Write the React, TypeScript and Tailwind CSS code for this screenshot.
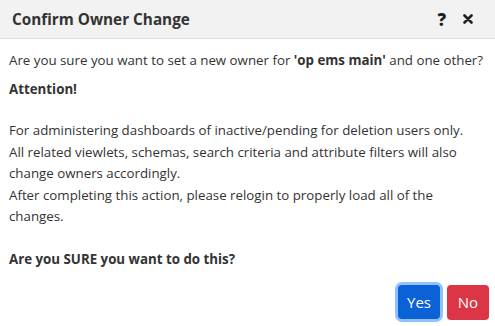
import React from "react";

export default function App() {
  return (
    <div
      className="w-[495px] h-[326px] bg-white text-[#333] overflow-hidden flex flex-col"
      style={{ fontFamily: '"Open Sans", "Noto Sans", sans-serif' }}
    >
      {/* header */}
      <div className="h-[39px] shrink-0 bg-[#f2f2f2] border-b border-[#dcdcdc] flex items-center justify-between pl-[12px] pr-[22px]">
        <span className="text-[15.3px] font-bold text-[#333]">Confirm Owner Change</span>
        <div className="flex items-center gap-[17px] text-[#222]">
          <span className="text-[17px] font-extrabold leading-none">?</span>
          <svg width="10" height="10" viewBox="0 0 10 10">
            <path d="M1.5 1.5 L8.5 8.5 M8.5 1.5 L1.5 8.5" stroke="#222" strokeWidth="2.6" strokeLinecap="round" />
          </svg>
        </div>
      </div>

      {/* body */}
      <div className="flex-1 px-[9px] pt-[11px] text-[13.3px] leading-[21.5px]">
        <p>
          Are you sure you want to set a new owner for <b>'op ems main'</b> and one other?
        </p>
        <p className="mt-[7px] font-bold">Attention!</p>
        <p className="mt-[20px]">
          For administering dashboards of inactive/pending for deletion users only.
          <br />
          All related viewlets, schemas, search criteria and attribute filters will also change owners accordingly.
          <br />
          After completing this action, please relogin to properly load all of the changes.
        </p>
        <p className="mt-[21px] font-bold">Are you SURE you want to do this?</p>
      </div>

      {/* footer */}
      <div className="flex justify-end gap-[7px] pr-[6px] pb-[6px]">
        <button className="h-[34px] w-[42px] rounded-[4px] bg-[#0a62d6] text-white text-[15px] ring-[3px] ring-[#8fc2ff]">
          Yes
        </button>
        <button className="h-[35px] w-[42px] rounded-[4px] bg-[#dc3545] text-white text-[15px]">
          No
        </button>
      </div>
    </div>
  );
}
